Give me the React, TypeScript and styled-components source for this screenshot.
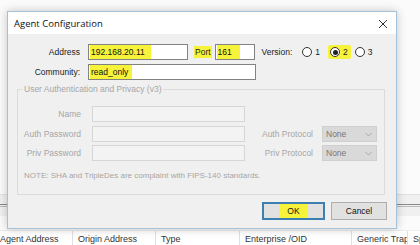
import React from "react";
import styled, { createGlobalStyle } from "styled-components";

const Global = createGlobalStyle`
  html, body { margin: 0; padding: 0; }
  body { width: 420px; height: 245px; overflow: hidden; background: #ffffff; }
  * { box-sizing: border-box; }
`;

const FONT = `"Liberation Sans", Arial, sans-serif`;

const Page = styled.div`
  position: relative;
  width: 420px;
  height: 245px;
  overflow: hidden;
  background: #fbfbfb;
  font-family: ${FONT};
  display: flex;
  flex-direction: column;
`;

const Spacer = styled.div<{ $h: number }>`
  height: ${(p) => p.$h}px;
  flex: none;
`;

const AppBand = styled.div`
  height: 22px;
  flex: none;
  background: #f0f0f0;
  display: flex;
  flex-direction: column;
  justify-content: center;
  border-top: 1px solid #e2e2e2;
`;

const BandRule = styled.div`
  height: 3px;
  border-top: 1px solid #8a8a8a;
  border-bottom: 1px solid #bdbdbd;
`;

const HeaderRow = styled.div`
  height: 16px;
  flex: none;
  margin-top: 4px;
  display: flex;
  background: #ffffff;
  border-top: 1px solid #ececec;
`;

const HeaderCell = styled.div<{ $w: number; $first?: boolean }>`
  width: ${(p) => p.$w}px;
  flex: none;
  font-size: 9px;
  color: #333;
  padding: 3px 0 0 ${(p) => (p.$first ? 0 : 5)}px;
  white-space: nowrap;
  overflow: hidden;
  border-right: 1px solid #e0e0e0;
`;

const Dialog = styled.div`
  position: absolute;
  left: 7px;
  top: 11px;
  width: 390px;
  height: 218px;
  border: 1px solid #a3c2d9;
  box-shadow: 0 0 9px rgba(0, 0, 0, 0.22);
  background: #f0f0f0;
  display: flex;
  flex-direction: column;
`;

const TitleBar = styled.div`
  height: 22px;
  background: #ffffff;
  display: flex;
  align-items: center;
  justify-content: space-between;
  padding: 1px 8px 0 6px;
  flex: none;
`;

const Title = styled.span`
  font-size: 9.5px;
  color: #111;
  font-family: "Open Sans", ${FONT};
`;

const Body = styled.div`
  flex: 1;
  display: flex;
  flex-direction: column;
  padding: 10px 0 0 0;
`;

const Row = styled.div<{ $mt?: number }>`
  display: flex;
  align-items: center;
  height: 16px;
  flex: none;
  margin-top: ${(p) => p.$mt ?? 0}px;
`;

const Label = styled.span<{ $w: number; $disabled?: boolean }>`
  width: ${(p) => p.$w}px;
  flex: none;
  text-align: right;
  font-size: 8.5px;
  color: ${(p) => (p.$disabled ? "#a6a6a6" : "#222")};
  white-space: nowrap;
`;

const Plain = styled.span<{ $ml: number; $disabled?: boolean }>`
  margin-left: ${(p) => p.$ml}px;
  font-size: 8.5px;
  color: ${(p) => (p.$disabled ? "#a6a6a6" : "#222")};
  white-space: nowrap;
`;

const Input = styled.div<{ $w: number; $ml: number; $disabled?: boolean }>`
  width: ${(p) => p.$w}px;
  height: 16px;
  margin-left: ${(p) => p.$ml}px;
  flex: none;
  border: 1px solid ${(p) => (p.$disabled ? "#d6d6d6" : "#828282")};
  background: ${(p) => (p.$disabled ? "#f3f3f3" : "#ffffff")};
  display: flex;
  align-items: center;
  padding-left: 1px;
  font-size: 8.5px;
  color: #111;
`;

const Hi = styled.span<{ $pr?: number }>`
  background: #f6f33a;
  padding: 1px ${(p) => p.$pr ?? 2}px 1px 1px;
  line-height: 12px;
`;

const Radio = styled.span<{ $ml: number; $checked?: boolean }>`
  margin-left: ${(p) => p.$ml}px;
  width: 10px;
  height: 10px;
  border-radius: 50%;
  border: 1px solid #333;
  background: #fff;
  flex: none;
  display: flex;
  align-items: center;
  justify-content: center;
  &::after {
    content: "";
    width: 5px;
    height: 5px;
    border-radius: 50%;
    background: ${(p) => (p.$checked ? "#222" : "transparent")};
  }
`;

const RadioHi = styled.span`
  display: flex;
  align-items: center;
  background: #f6f33a;
  height: 14px;
  padding: 0 3px 0 2px;
  margin-left: 8px;
  border-radius: 2px;
`;

const Group = styled.fieldset`
  margin: 4px 11px 0 9px;
  padding: 0;
  border: 1px solid #dcdcdc;
  height: 111px;
  flex: none;
  display: flex;
  flex-direction: column;
`;

const Legend = styled.legend`
  font-size: 8.5px;
  color: #a6a6a6;
  margin-left: 4px;
  padding: 0 2px;
`;

const Select = styled.div<{ $ml: number }>`
  margin-left: ${(p) => p.$ml}px;
  width: 55px;
  height: 16px;
  flex: none;
  background: #d9d9d9;
  border: 1px solid #cfcfcf;
  display: flex;
  align-items: center;
  justify-content: space-between;
  padding: 0 4px 0 3px;
  font-size: 8.5px;
  color: #777;
`;

const Note = styled.div`
  margin: 10px 0 0 6px;
  font-size: 8px;
  color: #a6a6a6;
  white-space: nowrap;
`;

const ButtonRow = styled.div`
  display: flex;
  justify-content: flex-end;
  gap: 6px;
  padding: 7px 9px 0 0;
`;

const Button = styled.div<{ $w: number; $focused?: boolean }>`
  width: ${(p) => p.$w}px;
  height: 18px;
  display: flex;
  align-items: center;
  justify-content: center;
  font-size: 8.5px;
  color: #111;
  background: #e1e1e1;
  border: ${(p) => (p.$focused ? "2px solid #3c7fb1" : "1px solid #adadad")};
`;

const OkHi = styled.span`
  background: #f6f33a;
  padding: 2px 8px;
`;

const Caret = () => (
  <svg width="7" height="5" viewBox="0 0 7 5">
    <path d="M0.5 1 L3.5 4 L6.5 1" stroke="#aaa" fill="none" />
  </svg>
);

export default function App() {
  return (
    <>
      <Global />
      <Page>
        <Spacer $h={194} />
        <AppBand>
          <BandRule />
        </AppBand>
        <Spacer $h={10} />
        <HeaderRow>
          <HeaderCell $w={73} $first>Agent Address</HeaderCell>
          <HeaderCell $w={83}>Origin Address</HeaderCell>
          <HeaderCell $w={84}>Type</HeaderCell>
          <HeaderCell $w={112}>Enterprise /OID</HeaderCell>
          <HeaderCell $w={56}>Generic Trap</HeaderCell>
          <HeaderCell $w={20}>Specific</HeaderCell>
        </HeaderRow>

        <Dialog>
          <TitleBar>
            <Title>Agent Configuration</Title>
            <svg width="10" height="10" viewBox="0 0 10 10">
              <path d="M1 1 L9 9 M9 1 L1 9" stroke="#333" strokeWidth="1" />
            </svg>
          </TitleBar>
          <Body>
            <Row>
              <Label $w={72}>Address</Label>
              <Input $w={100} $ml={8}>
                <Hi $pr={6}>192.168.20.11</Hi>
              </Input>
              <Plain $ml={6}>
                <Hi $pr={1}>Port</Hi>
              </Plain>
              <Input $w={40} $ml={3}>
                <Hi $pr={8}>161</Hi>
              </Input>
              <Plain $ml={7}>Version:</Plain>
              <Radio $ml={10} />
              <Plain $ml={3}>1</Plain>
              <RadioHi>
                <Radio $ml={0} $checked />
                <Plain $ml={3}>2</Plain>
              </RadioHi>
              <Radio $ml={4} />
              <Plain $ml={3}>3</Plain>
            </Row>
            <Row $mt={4}>
              <Label $w={72}>Community:</Label>
              <Input $w={168} $ml={8}>
                <Hi $pr={4}>read_only</Hi>
              </Input>
            </Row>
            <Group>
              <Legend>User Authentication and Privacy (v3)</Legend>
              <Row $mt={12}>
                <Label $w={63} $disabled>Name</Label>
                <Input $w={153} $ml={11} $disabled />
              </Row>
              <Row $mt={4}>
                <Label $w={63} $disabled>Auth Password</Label>
                <Input $w={153} $ml={11} $disabled />
                <Label $w={68} $disabled>Auth Protocol</Label>
                <Select $ml={9}>
                  None
                  <Caret />
                </Select>
              </Row>
              <Row $mt={3}>
                <Label $w={63} $disabled>Priv Password</Label>
                <Input $w={153} $ml={11} $disabled />
                <Label $w={68} $disabled>Priv Protocol</Label>
                <Select $ml={9}>
                  None
                  <Caret />
                </Select>
              </Row>
              <Note>NOTE: SHA and TripleDes are complaint with FIPS-140 standards.</Note>
            </Group>
            <ButtonRow>
              <Button $w={63} $focused>
                <OkHi>OK</OkHi>
              </Button>
              <Button $w={56}>Cancel</Button>
            </ButtonRow>
          </Body>
        </Dialog>
      </Page>
    </>
  );
}
